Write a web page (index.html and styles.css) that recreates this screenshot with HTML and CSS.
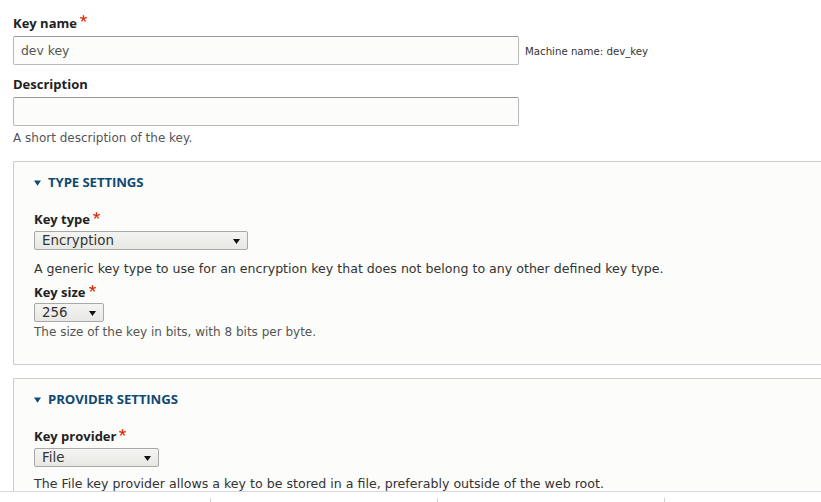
FILE: index.html
```
<!DOCTYPE html>
<html>
<head>
<meta charset="utf-8">
<title>Add key</title>
<link rel="stylesheet" href="styles.css">
</head>
<body>
<form class="form">
  <div class="field field-name">
    <label class="label">Key name<svg class="req" viewBox="0 0 16 16"><path d="M0,7.562l1.114-3.438c2.565,0.906,4.43,1.688,5.59,2.35C6.398,3.553,6.237,1.544,6.22,0.447h3.511c-0.05,1.597-0.234,3.6-0.558,6.003c1.664-0.838,3.566-1.613,5.714-2.325L16,7.562c-2.05,0.678-4.06,1.131-6.028,1.356c0.984,0.856,2.372,2.381,4.166,4.575l-2.906,2.059c-0.935-1.274-2.041-3.009-3.316-5.206c-1.194,2.275-2.244,4.013-3.147,5.206l-2.856-2.059c1.872-2.307,3.211-3.832,4.017-4.575C3.849,8.516,1.872,8.062,0,7.562"/></svg></label>
    <div class="input-row">
      <div class="input">dev key</div>
      <span class="machine">Machine name: dev_key</span>
    </div>
  </div>
  <div class="field field-desc">
    <label class="label">Description</label>
    <div class="input"></div>
    <div class="desc">A short description of the key.</div>
  </div>

  <section class="details details-type">
    <div class="summary"><svg class="tri" viewBox="0 0 8 6"><polygon points="0,0 8,0 4,6"/></svg>TYPE SETTINGS</div>
    <div class="details-body">
      <label class="label">Key type<svg class="req" viewBox="0 0 16 16"><path d="M0,7.562l1.114-3.438c2.565,0.906,4.43,1.688,5.59,2.35C6.398,3.553,6.237,1.544,6.22,0.447h3.511c-0.05,1.597-0.234,3.6-0.558,6.003c1.664-0.838,3.566-1.613,5.714-2.325L16,7.562c-2.05,0.678-4.06,1.131-6.028,1.356c0.984,0.856,2.372,2.381,4.166,4.575l-2.906,2.059c-0.935-1.274-2.041-3.009-3.316-5.206c-1.194,2.275-2.244,4.013-3.147,5.206l-2.856-2.059c1.872-2.307,3.211-3.832,4.017-4.575C3.849,8.516,1.872,8.062,0,7.562"/></svg></label>
      <div class="select select-type"><span>Encryption</span><svg class="arrow" viewBox="0 0 7 5"><polygon points="0,0 7,0 3.5,5"/></svg></div>
      <div class="note note-type">A generic key type to use for an encryption key that does not belong to any other defined key type.</div>
      <label class="label label-size">Key size<svg class="req" viewBox="0 0 16 16"><path d="M0,7.562l1.114-3.438c2.565,0.906,4.43,1.688,5.59,2.35C6.398,3.553,6.237,1.544,6.22,0.447h3.511c-0.05,1.597-0.234,3.6-0.558,6.003c1.664-0.838,3.566-1.613,5.714-2.325L16,7.562c-2.05,0.678-4.06,1.131-6.028,1.356c0.984,0.856,2.372,2.381,4.166,4.575l-2.906,2.059c-0.935-1.274-2.041-3.009-3.316-5.206c-1.194,2.275-2.244,4.013-3.147,5.206l-2.856-2.059c1.872-2.307,3.211-3.832,4.017-4.575C3.849,8.516,1.872,8.062,0,7.562"/></svg></label>
      <div class="select select-size"><span>256</span><svg class="arrow" viewBox="0 0 7 5"><polygon points="0,0 7,0 3.5,5"/></svg></div>
      <div class="desc desc-size">The size of the key in bits, with 8 bits per byte.</div>
    </div>
  </section>

  <section class="details details-provider">
    <div class="summary"><svg class="tri" viewBox="0 0 8 6"><polygon points="0,0 8,0 4,6"/></svg>PROVIDER SETTINGS</div>
    <div class="details-body">
      <label class="label">Key provider<svg class="req" viewBox="0 0 16 16"><path d="M0,7.562l1.114-3.438c2.565,0.906,4.43,1.688,5.59,2.35C6.398,3.553,6.237,1.544,6.22,0.447h3.511c-0.05,1.597-0.234,3.6-0.558,6.003c1.664-0.838,3.566-1.613,5.714-2.325L16,7.562c-2.05,0.678-4.06,1.131-6.028,1.356c0.984,0.856,2.372,2.381,4.166,4.575l-2.906,2.059c-0.935-1.274-2.041-3.009-3.316-5.206c-1.194,2.275-2.244,4.013-3.147,5.206l-2.856-2.059c1.872-2.307,3.211-3.832,4.017-4.575C3.849,8.516,1.872,8.062,0,7.562"/></svg></label>
      <div class="select select-provider"><span>File</span><svg class="arrow" viewBox="0 0 7 5"><polygon points="0,0 7,0 3.5,5"/></svg></div>
      <div class="note note-provider">The File key provider allows a key to be stored in a file, preferably outside of the web root.</div>
    </div>
  </section>
</form>

<div class="bottom-bar">
  <div class="cell cell-first"></div>
  <div class="cell"><span class="sep"></span></div>
  <div class="cell"><span class="sep"></span></div>
  <div class="cell cell-last"><span class="sep"></span></div>
</div>
</body>
</html>
```

FILE: styles.css
```
html, body {
  margin: 0;
  padding: 0;
  background: #ffffff;
  overflow: hidden;
}

body {
  font-family: "DejaVu Sans", Verdana, sans-serif;
  color: #222222;
}

.form {
  padding: 14px 0 0 13px;
  margin-right: -40px;
}

.label {
  display: flex;
  align-items: flex-start;
  font-family: "Open Sans", "DejaVu Sans", sans-serif;
  font-weight: 700;
  font-size: 13px;
  line-height: 18px;
  color: #222222;
  margin-bottom: 4px;
}

.req {
  width: 7px;
  height: 7px;
  fill: #e32700;
  margin-left: 3px;
  margin-top: 2px;
}

.field-name .req {
  margin-top: 1px;
}

.input-row {
  display: flex;
  align-items: center;
}

.input {
  box-sizing: border-box;
  width: 506px;
  height: 29px;
  background: #fcfcfa;
  border: 1px solid #b8b8b8;
  border-top-color: #999999;
  border-radius: 2px;
  padding: 0 7px;
  font-size: 12.4px;
  line-height: 27px;
  color: #555555;
}

.machine {
  margin-left: 6px;
  font-size: 10.2px;
  color: #333333;
  margin-top: 1px;
}

.field-desc {
  margin-top: 10px;
}

.desc {
  font-size: 12px;
  line-height: 16px;
  color: #555555;
  margin-top: 4px;
}

.details {
  background: #fcfcfa;
  border: 1px solid #cccccc;
  border-right: none;
  border-radius: 2px 0 0 2px;
  margin-top: 15px;
}

.details-provider {
  margin-top: 13px;
  min-height: 140px;
}

.summary {
  display: flex;
  align-items: center;
  padding: 10px 20px 8px;
  font-family: "Open Sans", "DejaVu Sans", sans-serif;
  font-weight: 700;
  font-size: 13.2px;
  line-height: 20px;
  color: #104a72;
  letter-spacing: -0.1px;
}

.tri {
  width: 7px;
  height: 6px;
  fill: #104a72;
  margin-right: 7px;
  margin-top: 1px;
}

.details-body {
  padding: 10px 20px 24px;
}

.details-body .label {
  margin-bottom: 3px;
}

.select {
  box-sizing: border-box;
  display: flex;
  align-items: center;
  justify-content: space-between;
  height: 19px;
  padding: 0 7px 0 7px;
  background: linear-gradient(#f4f4f2, #e7e7e4);
  border: 1px solid #a8a8a8;
  border-radius: 2px;
  font-size: 13.4px;
  line-height: 17px;
  color: #333333;
}

.select-type { width: 214px; }
.select-size { width: 70px; }
.select-provider { width: 125px; }

.arrow {
  width: 7px;
  height: 5px;
  fill: #111111;
  margin-top: 1px;
}

.note {
  font-size: 12.6px;
  line-height: 18px;
  color: #333333;
  margin-top: 10px;
}

.note-provider {
  margin-top: 8px;
}

.details-body .label-size {
  margin-top: 5px;
  margin-bottom: 2px;
}

.desc-size {
  margin-top: 2px;
}

.bottom-bar {
  position: fixed;
  left: 0;
  right: 0;
  top: 491px;
  bottom: 0;
  display: flex;
  background: #ffffff;
  border-top: 1px solid #d9d9d9;
}

.cell {
  width: 227px;
  flex: none;
}

.cell-first {
  width: 210px;
}

.cell-last {
  flex: 1;
}

.sep {
  display: block;
  width: 1px;
  height: 6px;
  margin-top: 6px;
  background: #d0d0d0;
}
```
